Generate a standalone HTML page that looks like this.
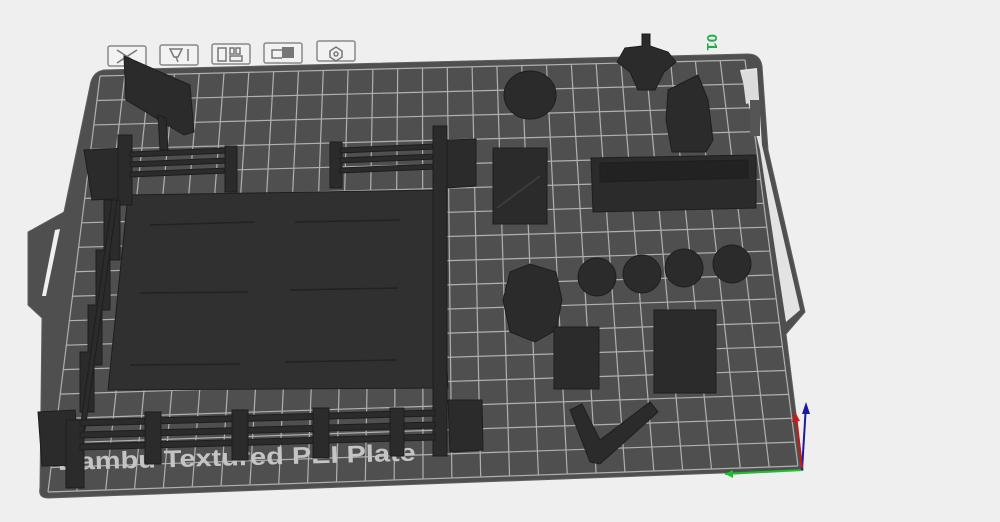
<!DOCTYPE html>
<html><head><meta charset="utf-8"><style>
html,body{margin:0;padding:0;background:#eeeeee;width:1000px;height:522px;overflow:hidden}
svg{display:block}
</style></head><body>
<svg id="s" width="1000" height="522" viewBox="0 0 1000 522" xmlns="http://www.w3.org/2000/svg">
<rect width="1000" height="522" fill="#efefef"/>
<!-- plate -->
<path d="M104,70 L748,54 Q760,54 762,66 L768,150 L805,312 L786,334 L803,470 L48,498 Q38,498 40,488 L42,318 L28,305 L28,232 L64,212 L90,86 Q92,72 104,70 Z" fill="#4f4f4f" stroke="#5e5e5e" stroke-width="1"/>
<g id="grid" stroke="#b0b0b0" stroke-width="1.2" fill="none"></g>
<!-- right strip -->
<path d="M740,70 L757,68 L762,145 L800,310 L786,322 L760,150 Z" fill="#e3e3e3"/>
<path d="M742,72 L756,70 L758,100 L746,104 Z" fill="#dcdcdc"/>
<rect x="750" y="100" width="10" height="36" fill="#555"/>
<!-- left handle slot -->
<path d="M55,230 L60,229 L46,296 L42,296 Z" fill="#efefef"/>
<text x="58" y="470" font-family="Liberation Sans,sans-serif" font-weight="bold" font-size="24" fill="#c4c4c4" textLength="358" lengthAdjust="spacingAndGlyphs" transform="rotate(-1.5 58 470)">Bambu Textured PEI Plate</text>
<!-- top icons -->
<g fill="#f2f2f2" stroke="#888" stroke-width="1.5">
<rect x="108" y="46" width="38" height="20" rx="2"/>
<rect x="160" y="45" width="38" height="20" rx="2"/>
<rect x="212" y="44" width="38" height="20" rx="2"/>
<rect x="264" y="43" width="38" height="20" rx="2"/>
<rect x="317" y="41" width="38" height="20" rx="2"/>
</g>
<g stroke="#777" stroke-width="1.5" fill="none">
<path d="M117,50 L137,63 M137,50 L117,63"/>
<path d="M170,49 h12 l-4,8 h-4 z M176,57 l2,5 M188,49 v12"/>
<rect x="218" y="48" width="8" height="13"/><rect x="230" y="48" width="4" height="6"/><rect x="236" y="48" width="4" height="6"/><rect x="230" y="56" width="12" height="5"/>
<path d="M282,50 h-10 v8 h10"/>
<path d="M330,51 l6,-4 l6,4 v6 l-6,4 l-6,-4 z"/><circle cx="336" cy="54" r="2"/>
</g>
<rect x="282" y="47" width="12" height="11" fill="#777"/>
<text x="707" y="34" font-family="Liberation Sans,sans-serif" font-weight="bold" font-size="15" fill="#1fae4b" transform="rotate(90 707 34)">01</text>
<!-- objects -->
<g fill="#2b2b2b" stroke="#1e1e1e" stroke-width="1">
<path d="M124,56 L190,85 L194,132 L184,135 L126,100 Z"/>
<path d="M158,115 L166,118 L168,150 L160,150 Z"/>
<path d="M128,195 L438,190 L448,388 L108,390 Z" fill="#303030"/>
<g stroke="#222" stroke-width="1.5" fill="none">
<path d="M150,225 L255,222 M295,222 L400,220 M140,293 L248,292 M290,290 L398,288 M130,365 L240,364 M285,362 L397,360"/>
</g>
<path d="M84,150 L128,148 L130,198 L92,200 Z"/>
<rect x="118" y="135" width="14" height="70"/>
<path d="M130,152 L228,148 L228,153 L130,157 Z M130,162 L228,158 L228,163 L130,167 Z M130,172 L228,168 L228,173 L130,177 Z"/>
<rect x="225" y="146" width="12" height="46"/>
<rect x="330" y="142" width="12" height="46"/>
<path d="M340,148 L437,144 L437,149 L340,153 Z M340,158 L437,154 L437,159 L340,163 Z M340,168 L437,164 L437,169 L340,173 Z"/>
<rect x="433" y="126" width="14" height="330"/>
<path d="M447,140 L476,139 L476,186 L447,188 Z"/>
<rect x="104" y="200" width="16" height="60"/><rect x="96" y="250" width="14" height="60"/><rect x="88" y="305" width="14" height="60"/><rect x="80" y="352" width="14" height="60"/>
<path d="M112,200 L80,430 L85,430 L117,200 Z"/>
<path d="M38,412 L75,410 L80,465 L42,466 Z"/>
<rect x="66" y="420" width="18" height="68"/>
<path d="M80,420 L435,410 L435,416 L80,426 Z M80,432 L435,422 L435,428 L80,438 Z M80,444 L435,434 L435,440 L80,450 Z"/>
<rect x="145" y="412" width="16" height="52"/><rect x="232" y="410" width="16" height="50"/><rect x="313" y="408" width="16" height="50"/><rect x="390" y="408" width="14" height="48"/>
<path d="M448,400 L482,400 L483,450 L450,452 Z"/>
<ellipse cx="530" cy="95" rx="26" ry="24"/>
<rect x="493" y="148" width="54" height="76"/>
<path d="M497,208 L540,176" stroke="#3c3c3c" stroke-width="2"/>
<path d="M642,34 L650,34 L650,46 L668,52 L676,62 L664,72 L655,90 L638,90 L630,72 L617,62 L625,48 L642,46 Z"/>
<path d="M668,90 L698,75 L708,100 L713,140 L706,152 L672,152 L666,120 Z"/>
<path d="M591,158 L756,155 L756,208 L593,212 Z"/>
<path d="M600,163 L748,160 L748,178 L600,182 Z" fill="#222"/>
<circle cx="597" cy="277" r="19"/><circle cx="642" cy="274" r="19"/><circle cx="684" cy="268" r="19"/><circle cx="732" cy="264" r="19"/>
<path d="M510,272 L530,264 L556,272 L562,300 L556,330 L535,342 L510,332 L503,300 Z"/>
<rect x="554" y="327" width="45" height="62"/>
<rect x="654" y="310" width="62" height="83"/>
<path d="M570,410 L582,404 L600,440 L650,402 L658,412 L600,464 L590,462 Z"/>
</g>
<path d="M803,470 L725,474" stroke="#19c32a" stroke-width="2"/>
<path d="M725,474 L733,470 L733,478 Z" fill="#19c32a"/>
<path d="M802,470 L806,405" stroke="#1a1aa0" stroke-width="2"/>
<path d="M806,402 L802,414 L810,414 Z" fill="#1a1aa0"/>
<path d="M802,468 L796,415" stroke="#c81919" stroke-width="2"/>
<path d="M795,412 L792,422 L800,421 Z" fill="#c81919"/>
</svg>
<script>
(function(){
var TL=[100,76],TR=[745,60],BR=[798,466],BL=[48,492];
function P(u,v){var x=(1-u)*(1-v)*TL[0]+u*(1-v)*TR[0]+u*v*BR[0]+(1-u)*v*BL[0];
var y=(1-u)*(1-v)*TL[1]+u*(1-v)*TR[1]+u*v*BR[1]+(1-u)*v*BL[1];return [x,y];}
var g=document.getElementById('grid'),ns='http://www.w3.org/2000/svg';
var NU=26,NV=17;
function line(a,b){var l=document.createElementNS(ns,'line');l.setAttribute('x1',a[0]);l.setAttribute('y1',a[1]);l.setAttribute('x2',b[0]);l.setAttribute('y2',b[1]);g.appendChild(l);}
for(var i=0;i<=NU;i++){line(P(i/NU,0),P(i/NU,1));}
for(var j=0;j<=NV;j++){line(P(0,j/NV),P(1,j/NV));}
})();
</script>
</body></html>
